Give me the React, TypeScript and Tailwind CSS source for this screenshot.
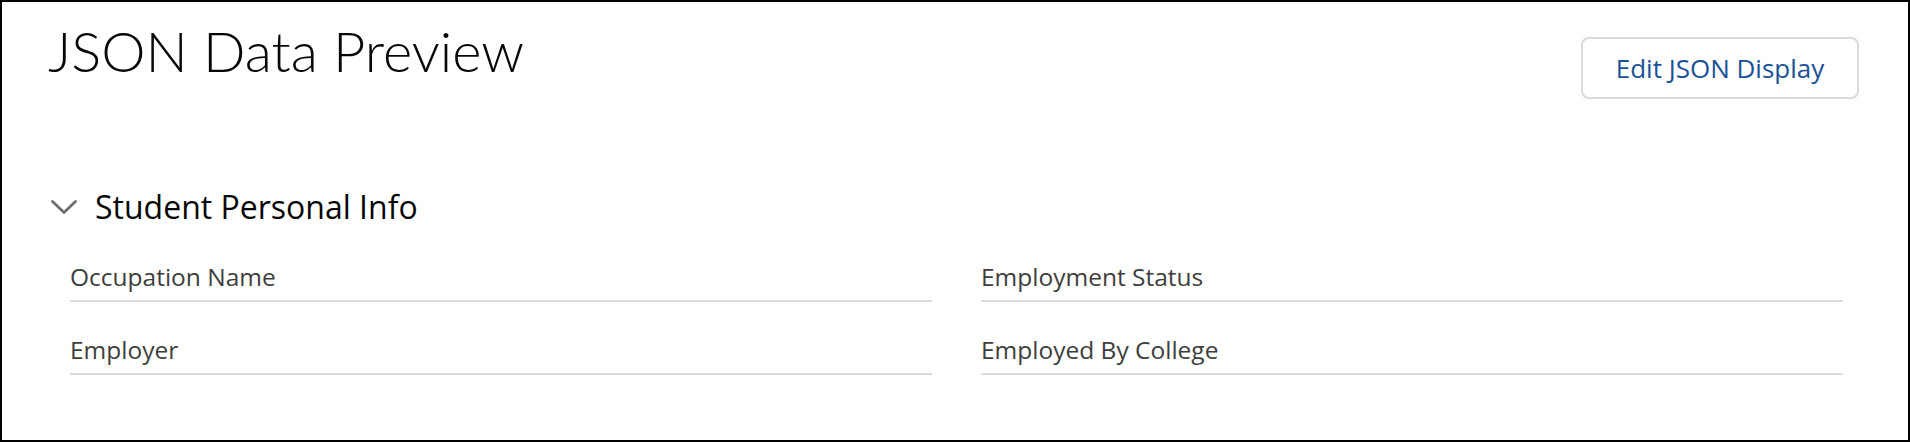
const fields = [
  "Occupation Name",
  "Employment Status",
  "Employer",
  "Employed By College",
];

function Chevron() {
  return (
    <svg width="26" height="14" viewBox="0 0 26 14" fill="none" className="shrink-0">
      <polyline
        points="1.5,1.5 13,12.5 24.5,1.5"
        stroke="#706e6b"
        strokeWidth="2.75"
        strokeLinecap="round"
        strokeLinejoin="round"
      />
    </svg>
  );
}

export default function App() {
  return (
    <div className="box-border h-[442px] w-[1910px] border-2 border-black bg-white font-['Open_Sans',sans-serif]">
      <div className="flex items-start justify-between pl-[46px] pr-[49px] pt-[21px]">
        <h1 className="font-['Lato',sans-serif] text-[56px] font-light leading-[56px] text-[#080707]">
          JSON Data Preview
        </h1>
        <button className="mt-[14px] h-[62px] w-[278px] rounded-lg border-2 border-[#dddbda] bg-white text-[26px] text-[#1b5297]">
          Edit JSON Display
        </button>
      </div>

      <div className="mt-[88px] flex items-center gap-[18px] pl-[49px]">
        <Chevron />
        <span className="text-[32px] leading-[40px] text-[#080707]">Student Personal Info</span>
      </div>

      <div className="mt-[34px] grid grid-cols-2 gap-x-[49px] gap-y-[32px] pl-[68px] pr-[65px]">
        {fields.map((f) => (
          <div key={f} className="border-b-2 border-[#dddbda] pb-[7px]">
            <span className="block text-[24.5px] leading-[32px] text-[#3e3e3c]">{f}</span>
          </div>
        ))}
      </div>
    </div>
  );
}
